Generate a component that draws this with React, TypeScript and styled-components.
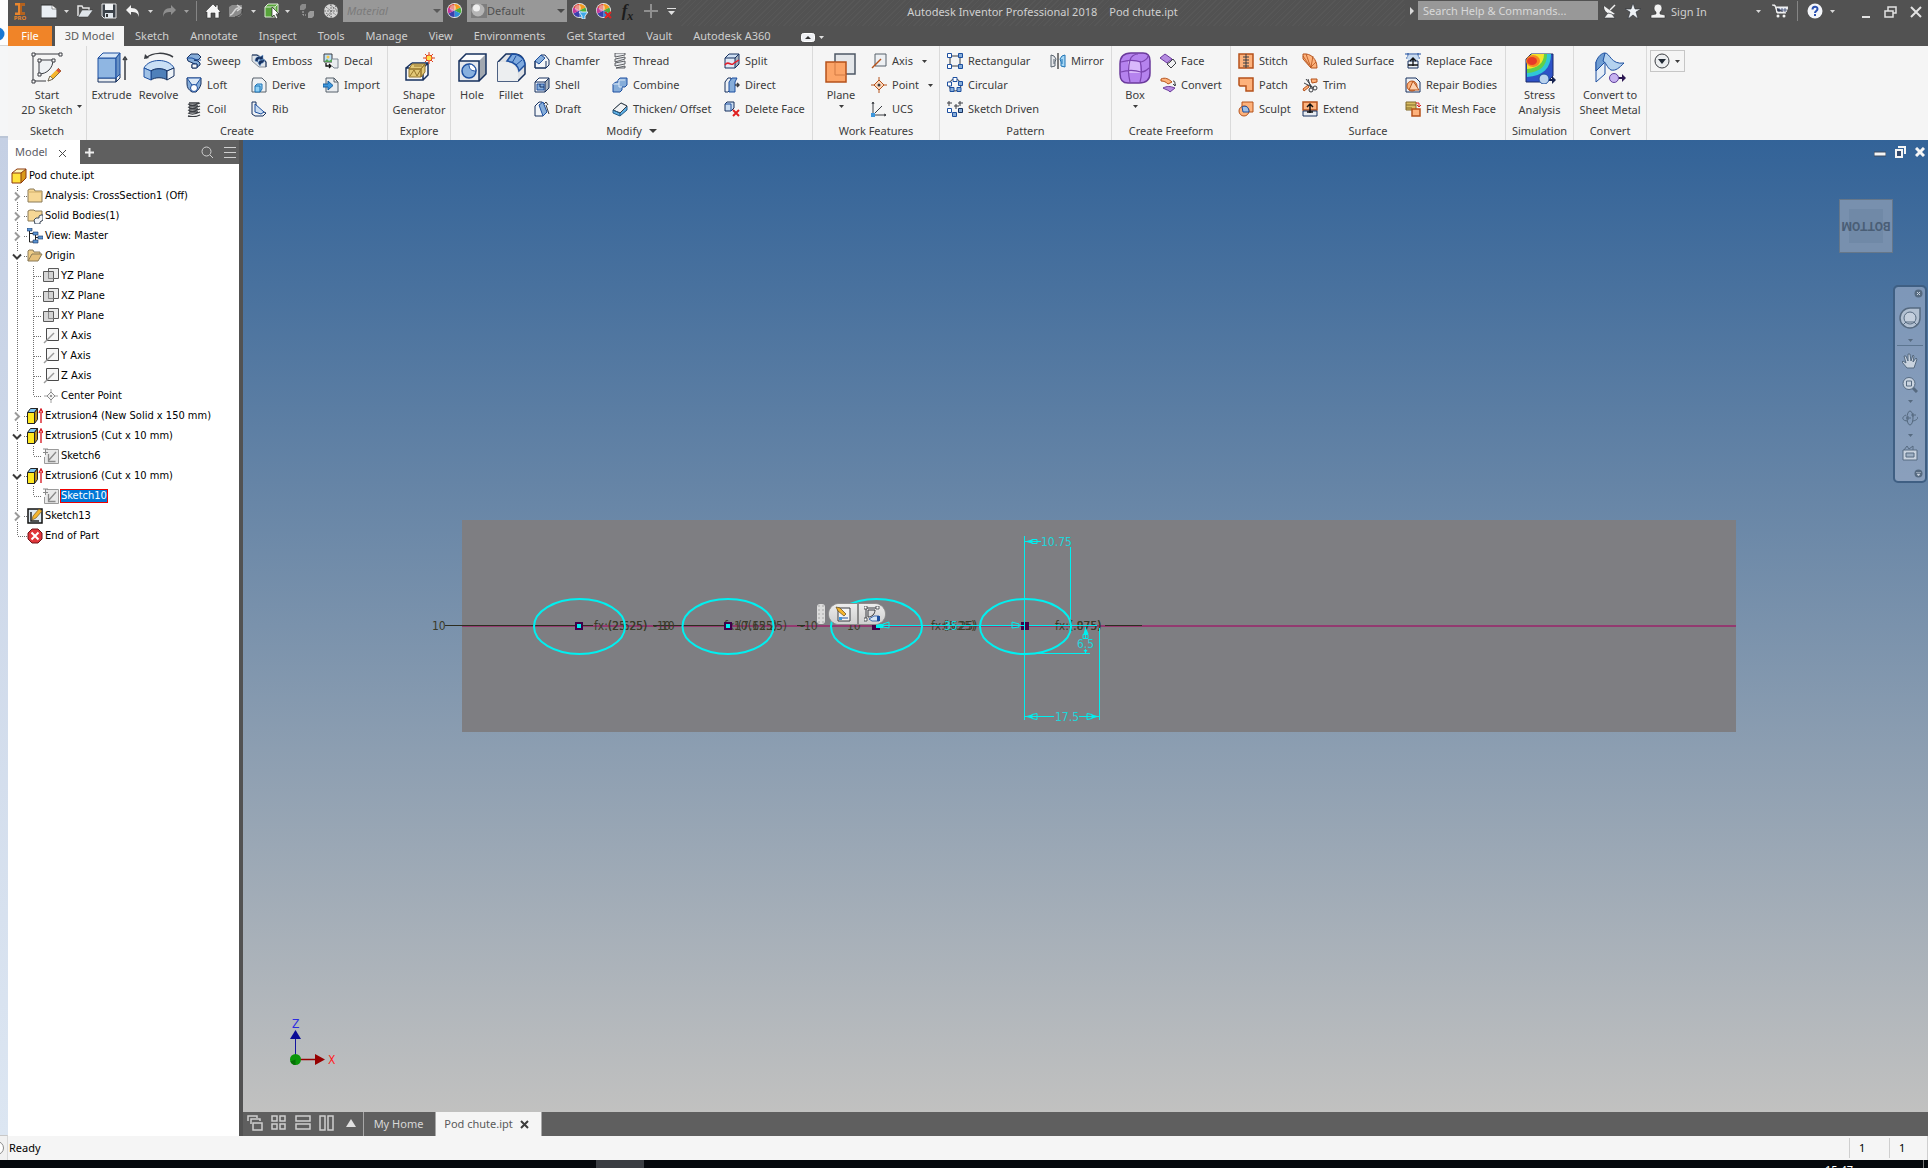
import React from "react";
import styled, { createGlobalStyle, css } from "styled-components";

const UI = `"Noto Sans", "Open Sans", sans-serif`;
const TREE = `"DejaVu Sans Condensed", "DejaVu Sans", sans-serif`;

const Global = createGlobalStyle`
  *, *::before, *::after { box-sizing: border-box; }
  html, body, #root { height: 100%; }
  body { margin: 0; overflow: hidden; font: 11px/16px ${UI}; color: #3c3c3c; background: #f5f5f5; }
  button, input, select { font: inherit; color: inherit; }
  svg { display: block; flex: none; }
`;

/* ---------- frame ---------- */
const Desktop = styled.div`display: flex; flex-direction: column; height: 100%;`;
const Screen = styled.div`display: flex; flex: 1; min-height: 0;`;
const BackWindow = styled.div`flex: none; width: 8px; display: flex; flex-direction: column; overflow: hidden; background: #fdfdfd;`;
const BackTop = styled.div`height: 46px; padding-top: 27px; border-bottom: 1px solid #d5d5d5;`;
const BackBand = styled.div`height: 92px; background: #f5f6f7; border-bottom: 2px solid #bac5d6;`;
const BackFill = styled.div`flex: 1; background: linear-gradient(#c5d0e4, #dce6f2);`;
const BackFoot = styled.div`height: 25px; padding-top: 4px; background: #f1f1f1; border-top: 1px solid #c8c8c8; border-right: 1px solid #d8d8d8;`;
const AppWindow = styled.div`flex: 1; min-width: 0; display: flex; flex-direction: column;`;
const Plain = css`border: 0; padding: 0; margin: 0; background: none;`;

/* ---------- title bar ---------- */
const TitleBar = styled.header`display: flex; height: 26px; background: #525252; color: #d6d6d6;`;
const Tool = styled.button<{ $w: number; $ml?: number }>`
  ${Plain} flex: none; width: ${p => p.$w}px; margin-left: ${p => p.$ml ?? 0}px; height: 22px;
  display: flex; align-items: center; justify-content: center;
`;
const Logo = styled.div`
  flex: none; width: 24px; margin-right: 6px; padding-top: 3px; display: flex; flex-direction: column; align-items: center;
  color: #e8862e; font: 700 6px/7px ${UI};
`;
const Rule = styled.span<{ $l: number; $r: number }>`flex: none; width: 1px; height: 20px; margin: 1px ${p => p.$r}px 0 ${p => p.$l}px; background: #858585;`;
const Combo = styled.label<{ $ml?: number }>`
  position: relative; flex: none; width: 100px; height: 22px; margin-left: ${p => p.$ml ?? 0}px; padding-left: 4px;
  display: flex; align-items: center; background: #989898; color: #555;
  & > svg:last-child { position: absolute; right: 2px; top: 9px; pointer-events: none; }
`;
const Picker = styled.select<{ $faint?: boolean }>`
  ${Plain} appearance: none; flex: 1; min-width: 0; outline: none; opacity: 1;
  font-style: ${p => (p.$faint ? "italic" : "normal")}; color: ${p => (p.$faint ? "#7b7b7b" : "#505050")};
`;
const Caption = styled.h1`
  flex: 1; margin: 0; font: 400 11px/24px ${UI}; display: flex; gap: 12px; justify-content: center; color: #d0d0d0;
  background: repeating-linear-gradient(135deg, #525252 0 3px, #575757 3px 4px);
`;
const Search = styled.input`
  ${Plain} flex: none; width: 180px; height: 19px; margin-top: 1px; padding: 0 5px; background: #989898; outline: none;
  &::placeholder { color: #d9d9d9; opacity: 1; }
`;
const SignIn = styled.button`${Plain} flex: none; width: 84px; height: 24px; padding-left: 1px; text-align: left; color: #d0d0d0;`;
const Fx = styled.span`
  font: italic 700 17px/18px "Liberation Serif", serif; color: #1c1c1c;
  & sub { font-size: 12px; line-height: 8px; }
`;

/* ---------- ribbon tabs ---------- */
const TabRow = styled.nav`display: flex; height: 20px; background: #525252;`;
const FileTab = styled.button`${Plain} width: 44px; margin-right: 3px; background: #f08428; color: #fff;`;
const RibbonTab = styled.button<{ $on?: boolean }>`
  ${Plain} padding: 0 11px 0 10px; color: #cfcfcf; white-space: nowrap;
  ${p => p.$on && css`width: 69px; margin-right: 1px; padding: 0; background: #f5f5f5; color: #5a5a5a;`}
`;

/* ---------- ribbon ---------- */
const Ribbon = styled.section`display: flex; height: 94px; background: #f5f5f5;`;
const Panel = styled.section<{ $w: number }>`
  flex: none; width: ${p => p.$w}px; padding-top: 1px; display: flex; flex-direction: column; border-right: 1px solid #dadada;
`;
const PanelBody = styled.div`flex: 1; display: flex;`;
const PanelTitle = styled.h2`
  margin: 0; height: 18px; font: 400 11px/18px ${UI}; display: flex; gap: 7px; align-items: center; justify-content: center; white-space: nowrap;
`;
const Big = styled.button<{ $w?: number }>`
  ${Plain} flex: ${p => (p.$w ? "none" : "1")}; width: ${p => (p.$w ? p.$w + "px" : "auto")}; padding-top: 5px;
  display: flex; flex-direction: column; align-items: center; line-height: 15px; white-space: pre-line;
  & > span { margin-top: 3px; }
  & > svg + span + svg { margin-top: 3px; }
`;
const BigText = styled.span`position: relative;`;
const SideCaret = styled.i`position: absolute; right: -9px; bottom: 9px;`;
const Column = styled.div<{ $w?: number; $ml?: number }>`
  flex: none; width: ${p => (p.$w ? p.$w + "px" : "auto")}; margin-left: ${p => p.$ml ?? 0}px; padding-top: 2px;
  display: flex; flex-direction: column; align-items: flex-start;
`;
const Small = styled.button`${Plain} height: 24px; display: flex; align-items: center; gap: 5px; white-space: nowrap;`;
const SmallCaret = styled.i`display: flex; margin-left: 4px;`;
const PanelMenu = styled.button`
  ${Plain} width: 35px; height: 22px; margin: 4px 0 0 3px; padding: 0 4px 0 3px; display: flex; align-items: center; justify-content: space-between;
  border: 1px solid #c6c6c6;
`;

/* ---------- model browser ---------- */
const Workspace = styled.main`flex: 1; min-height: 0; display: flex;`;
const Browser = styled.aside`flex: none; width: 235px; display: flex; flex-direction: column; background: #fff; border-right: 4px solid #525252;`;
const BrowserHead = styled.div`height: 24px; display: flex; align-items: center; background: #5f5f5f; color: #e4e4e4;`;
const BrowserTab = styled.div`
  width: 72px; height: 24px; padding: 0 13px 0 7px; display: flex; align-items: center; justify-content: space-between; background: #fff; color: #5c5c66;
  & > svg { margin-top: 3px; }
`;
const HeadButton = styled.button<{ $w: number; $push?: boolean }>`
  ${Plain} width: ${p => p.$w}px; height: 24px; margin-left: ${p => (p.$push ? "auto" : "0")}; display: flex; align-items: center; justify-content: center;
`;
const Tree = styled.ul`margin: 0; padding: 2px 0 0 1px; list-style: none; font: 11px/20px ${TREE}; color: #000;`;
const TreeRow = styled.li`display: flex; align-items: center; height: 20px; white-space: nowrap;`;
const RootRow = styled(TreeRow)`padding-left: 2px;`;
const TreeText = styled.span<{ $sel?: boolean }>`
  padding: 0 1px; margin-left: 1px;
  ${p => p.$sel && css`height: 14px; line-height: 12px; padding: 0; background: #0078d7; color: #fff; border: 1px solid #f00000;`}
`;

/* ---------- viewport ---------- */
const Stage = styled.div`flex: 1; min-width: 0; display: flex; flex-direction: column;`;
const Viewport = styled.div`position: relative; flex: 1; overflow: hidden; background: linear-gradient(#336398, #c1c1c0);`;
const Canvas = styled.svg`position: absolute; inset: 0; width: 100%; height: 100%;`;
const WindowButtons = styled.div`position: absolute; right: 1px; top: 1px; display: flex;`;
const ViewCube = styled.button`
  ${Plain} position: absolute; right: 35px; top: 59px; width: 54px; height: 54px; padding: 9px 0; background: #7890ae; border: 1px solid #667789;
  display: flex; justify-content: center;
  color: #4a5e76; font: 700 12px/34px "Roboto", sans-serif; transform: rotate(180deg);
  & > span { width: 34px; height: 34px; display: flex; justify-content: center; background: #7089a7; }
`;
const NavBar = styled.div`
  position: absolute; right: 1px; top: 145px; width: 34px; height: 198px; display: flex; flex-direction: column; align-items: center;
  background: rgba(170, 182, 205, 0.55); border: 2px solid #3f5f83; border-radius: 5px; background-clip: padding-box;
`;
const NavButton = styled.button<{ $h: number; $end?: boolean }>`
  ${Plain} width: 30px; height: ${p => p.$h}px; display: flex; align-items: center; justify-content: ${p => (p.$end ? "flex-end" : "center")}; padding-right: ${p => (p.$end ? 2 : 0)}px;
`;
const NavRule = styled.hr`width: 26px; height: 1px; margin: 1px 0 2px; border: 0; background: #5c7590;`;
const MiniBar = styled.div`position: absolute; left: 574px; top: 463px; display: flex; align-items: center; gap: 3px;`;
const Grip = styled.span`width: 8px; height: 20px; border-radius: 3px; background: radial-gradient(#c2c2c2 0 1px, transparent 1px) 0 0 / 4px 4px, #dcdcdc;`;
const Pill = styled.div`display: flex; height: 22px; border-radius: 11px; overflow: hidden; border: 1px solid #8c8c8c; background: #ddd;`;
const PillButton = styled.button`
  ${Plain} width: 28px; display: flex; align-items: center; justify-content: center; background: linear-gradient(#ececec, #cfcfcf);
  & + & { border-left: 2px solid #8a8a8a; }
`;

/* ---------- document tabs, status, taskbar ---------- */
const DocBar = styled.nav`display: flex; height: 24px; background: #5f5f5f; color: #d8d8d8;`;
const DocTab = styled.button<{ $w: number; $on?: boolean }>`
  ${Plain} width: ${p => p.$w}px; padding: 0 2px 0 0; display: flex; align-items: center; justify-content: center; gap: 7px; border-left: 1px solid #a8a8a8;
  ${p => p.$on && css`padding: 0 4px 0 0; background: #f5f5f5; color: #5a5a5a; border-right: 1px solid #a8a8a8;`}
`;
const Status = styled.footer`height: 24px; display: flex; align-items: center; padding-left: 1px; background: #f5f5f5; color: #000; border-right: 1px solid #cfcfcf;`;
const StatusText = styled.span`flex: 1;`;
const Count = styled.span<{ $w: number }>`width: ${p => p.$w}px; height: 20px; padding-left: 9px; line-height: 20px; border-left: 1px solid #cfcfcf;`;
const Taskbar = styled.div`height: 8px; display: flex; overflow: hidden; background: #05080c; color: #fff;`;
const ActiveApp = styled.span`width: 48px; margin-left: 596px; background: #3a3d42;`;
const Clock = styled.time`margin: 3px 70px 0 auto; height: 14px; line-height: 14px;`;
const ShowDesktop = styled.span`width: 5px; border-left: 1px solid #777;`;

/* ---------- icons ---------- */
const N = "#16305e", B = "#1c4fa0", O = "#b5521b", K = "#3a3d42";
const F1 = "#c9dcf1", F2 = "#86add9", OF = "#fdb27c";

const Ic = ({ s = 16, w, h, children }: { s?: number; w?: number; h?: number; children: React.ReactNode }) => (
  <svg width={w ?? s} height={h ?? s} viewBox={`0 0 ${w ?? s} ${h ?? s}`} fill="none" aria-hidden="true">{children}</svg>
);
const Caret = ({ c = "#3c3c3c", w = 5 }: { c?: string; w?: number }) => (
  <Ic w={w} h={w > 5 ? 4 : 3}><path d={`M0 0h${w}L${w / 2} ${w > 5 ? 4 : 3}z`} fill={c} /></Ic>
);
const Wheel = ({ extra }: { extra?: React.ReactNode }) => (
  <Ic>
    <circle cx="7.500" cy="7.500" r="7.500" fill="#e8e8e8" />
    <path d="M7.500 7.500L1.500 4.500A6.500 6.500 0 0 1 7.500 1z" fill="#d83a2c" />
    <path d="M7.500 7.500V1a6.500 6.500 0 0 1 6 3.500z" fill="#f29a1f" />
    <path d="M7.500 7.500l6-3a6.500 6.500 0 0 1 0 6z" fill="#4ab03c" />
    <path d="M7.500 7.500l6 3a6.500 6.500 0 0 1-6 3.500z" fill="#2f8fd8" />
    <path d="M7.500 7.500V14a6.500 6.500 0 0 1-6-3.500z" fill="#3a3fae" />
    <path d="M7.500 7.500l-6 3a6.500 6.500 0 0 1 0-6z" fill="#c43a9a" />
    <circle cx="6" cy="5" r="3" fill="#fff" opacity=".45" />
    {extra}
  </Ic>
);
const RedX = <path d="M9 9l6 6m0-6l-6 6" stroke="#e02020" strokeWidth="2" />;

const qat = {
  logo: <Ic w={12} h={12}><path d="M1 0h10v2.500H8v7h3V12H1V9.500h3v-7H1z" fill="#e8862e" /><path d="M6 0h5v2.500H8v7h3V12H6z" fill="#b5611c" /></Ic>,
  create: <Ic><path d="M0 2h11l5 4v9H0z" fill="#e9eef3" stroke="#2f2f2f" /><path d="M11 2v4h5z" fill="#fff" stroke="#555" strokeWidth=".6" /></Ic>,
  open: <Ic><path d="M1 13V3h4l1 2h6v2" stroke="#e4e4e4" strokeWidth="1.500" /><path d="M1 14l4-7h11l-5 7z" fill="#dfe5ea" stroke="#333" strokeWidth=".5" /></Ic>,
  save: <Ic><path d="M1 1h14v14H3l-2-2z" fill="#3b4148" stroke="#e6e6e6" /><path d="M4 1h8v6H4z" fill="#f2f4f6" /><path d="M4 10h8v5H4z" fill="#dfe5ea" /><path d="M5 11h2v3H5z" fill="#333" /></Ic>,
  undo: <Ic><path d="M6 2v3c6 0 8 3 8 9-1-4-3-5-8-5v3L1 7z" fill="#f2f2f2" /></Ic>,
  redo: <Ic><path d="M10 2v3c-6 0-8 3-8 9 1-4 3-5 8-5v3l5-5z" fill="#8e8e8e" /></Ic>,
  home: <Ic><path d="M8 1L0 9h2v6h4v-5h4v5h4V9h2l-3-3V2h-2v2z" fill="#f6f6f6" stroke="#333" strokeWidth=".6" /></Ic>,
  update: <Ic><path d="M1 4l3-2h10v9l-3 3H1z" fill="#8b8b8b" /><path d="M2 12C6 12 6 4 11 5m-2-3l4 3-4 3" stroke="#d5d5d5" strokeWidth="1.500" /><path d="M14 6c1 5-3 7-7 8" stroke="#3d3d3d" /></Ic>,
  select: <Ic><path d="M1 4l3-3h10v9l-3 4H1z" fill="#57a33a" stroke="#dcebd4" /><path d="M1 4h10v10M11 4l3-3" stroke="#dcebd4" /><path d="M8 4v10l2-2 2 4 2-1-2-4h3z" fill="#fff" stroke="#222" strokeWidth=".7" /></Ic>,
  parts: <Ic><path d="M1 3l2-2h4v4L5 7H1z" fill="#8a8a8a" /><path d="M9 10l2-2h4v5l-2 2H9z" fill="#9a9a9a" /><path d="M4 8v4h3" stroke="#b5b5b5" strokeDasharray="2 1" /></Ic>,
  ball: <Ic><circle cx="8" cy="8" r="7" fill="#d6d6d6" /><path d="M3 4l10 8M8 1v14M1 8h14M4 13L13 3M3 10l6 4M7 2l7 5" stroke="#777" strokeDasharray="2 1" /></Ic>,
  sphere: <Ic><path d="M0 1h16v14H0z" fill="#7d7d7d" /><circle cx="7" cy="7" r="6.500" fill="#b5b5b5" /><circle cx="5.500" cy="5" r="3.500" fill="#eee" /></Ic>,
  plus: <Ic><path d="M8 1v14M1 8h14" stroke="#8f8f8f" strokeWidth="2" /></Ic>,
  more: <Ic w={9} h={7}><path d="M0 0h9v1H0zM1 3h7L4.500 7z" fill="#e0e0e0" /></Ic>,
  dish: <Ic><path d="M2 3c0 6 5 9 11 8L9 10l-2-2z" fill="#f2f2f2" stroke="#2b3038" strokeWidth=".6" /><path d="M2 3c0 6 5 9 11 8z" fill="#f2f2f2" /><path d="M6 10l-4 5h11l-3-4z" fill="#f2f2f2" stroke="#2b3038" strokeWidth=".6" /><path d="M8 7l5-5" stroke="#f2f2f2" strokeWidth="1.500" /></Ic>,
  star: <Ic><path d="M8 0l2 6h6l-5 3 2 7-5-4-5 4 2-7-5-3h6z" fill="#eef2f6" stroke="#2b3038" strokeWidth=".6" /></Ic>,
  user: <Ic><path d="M4 5a4 4 0 0 1 8 0c0 2-1 3-2 4v2l5 1v3H1v-3l5-1V9C5 8 4 7 4 5z" fill="#f2f2f2" stroke="#333" strokeWidth=".6" /></Ic>,
  cart: <Ic><path d="M0 2h3l2 8h9M4 4h12l-2 5H5z" fill="#e9edf5" stroke="#f2f2f2" /><path d="M7 5v4M10 5v4M13 5v4M5 7h10" stroke="#23305c" strokeWidth=".7" /><circle cx="6" cy="13" r="1.500" fill="#f2f2f2" /><circle cx="12" cy="13" r="1.500" fill="#f2f2f2" /></Ic>,
  help: <Ic><circle cx="8" cy="8" r="7.500" fill="#f4f6fa" /><path d="M5.500 6.500C5.500 3 10.500 3 10.500 6c0 2-2.500 2-2.500 4M8 11v2" stroke="#2a50b0" strokeWidth="2" /></Ic>,
  min: <Ic w={10} h={16}><path d="M1 13h8v2H1z" fill="#e2e2e2" /></Ic>,
  restore: <Ic w={13} h={16}><path d="M1 8h8v6H1zM4 8V4h8v6H9" stroke="#e2e2e2" strokeWidth="1.500" /></Ic>,
  close: <Ic w={12} h={16}><path d="M1 4l10 10M11 4L1 14" stroke="#e2e2e2" strokeWidth="2" /></Ic>,
};

const cube = (fill: string, top: string) => (
  <><path d="M1 5h10v10H1z" fill={fill} /><path d="M1 5l4-4h10l-4 4z" fill={top} /><path d="M11 5l4-4v10l-4 4z" fill="#a9b3bf" /><path d="M1 5h10v10H1zM1 5l4-4h10v10l-4 4M11 5l4-4" stroke={N} /></>
);
const pencil = (x: number, y: number) => (
  <g transform={`translate(${x} ${y})`}><path d="M0 14l2-5 8-8 3 3-8 8z" fill="#f5b52e" stroke="#6a5426" strokeWidth=".8" /><path d="M0 14l2-5 3 3z" fill="#fff6df" stroke="#444" strokeWidth=".6" /><path d="M8 3l2-2 3 3-2 2z" fill="#d4503c" /><path d="M2 9l8-8" stroke="#fff" strokeWidth=".8" /></g>
);

const big = {
  sketch: <Ic s={32}><path d="M3 2h26M2 3v26M3 29h12" stroke={K} /><path d="M8 8h14c0 8-6 14-14 14z" stroke={K} fill="#eef1f4" /><path d="M1 1h3v3H1zM28 1h3v3h-3zM1 28h3v3H1zM7 7h3v3H7zM21 7h3v3h-3zM7 21h3v3H7z" fill="#fff" stroke={K} />{pencil(17, 15)}</Ic>,
  extrude: <Ic s={32}><path d="M2 26h18v4H2zM20 26l4-4v4l-4 4z" fill="#e8ecf0" stroke={N} /><path d="M2 6h18v20H2z" fill="#8fb6e2" stroke={B} /><path d="M2 6l5-5h17l-4 5z" fill="#d6e6f7" stroke={B} /><path d="M20 6l4-5v21l-4 4z" fill="#6791c6" stroke={B} /><path d="M29 28V7m-2 1l2-3 2 3" stroke={K} strokeWidth="1.500" /></Ic>,
  revolve: <Ic s={32}><path d="M3 6C10 0 22 0 30 5" stroke={K} strokeWidth="1.500" /><path d="M1 7l1-5 4 4z" fill={K} /><path d="M1 16C6 6 26 6 31 16l-7 3C20 16 12 16 8 19z" fill="#c9dff5" stroke={B} /><path d="M8 19c4-3 12-3 16 0v9c-4-3-12-3-16 0z" fill="#4f80ba" stroke={N} /><path d="M1 16l7 3v9l-7-3z" fill="#9fc1e6" stroke={B} /><path d="M31 16l-7 3v9l7-4z" fill="#eef3f8" stroke={N} /></Ic>,
  shape: <Ic s={32}><path d="M3 16h17v12H3zM9 11h16v12l-5 5M20 16l5-5M3 16l6-5" fill="none" stroke={N} strokeWidth="1.500" /><path d="M6 17h12v8H6zM9 12h13l-4 5H6zM18 17l4-5v8l-4 5z" fill="#e2c877" stroke="#94742a" /><path d="M7 24l4-6 3 6 4-7M11 14h8" stroke="#94742a" /><path d="M26 0v12M20 6h12M22 2l8 8M30 2l-8 8" stroke="#e2411e" /><circle cx="26" cy="6" r="3" fill="#ffdf4a" stroke="#e2411e" /></Ic>,
  hole: <Ic s={32}><path d="M3 9h20v20H3z" fill="#e6e9ed" /><path d="M3 9l7-7h20l-7 7z" fill="#fbfcfd" /><path d="M23 9l7-7v20l-7 7z" fill="#a2a8b0" /><path d="M3 9h20v20H3zM3 9l7-7h20v20l-7 7" stroke={N} strokeWidth="1.500" /><circle cx="13" cy="19" r="7" fill="#87b0df" stroke={B} strokeWidth="1.500" /><path d="M13 12a7 7 0 0 1 7 7c-5 0-7-2-7-7z" fill="#fff" stroke={B} /></Ic>,
  fillet: <Ic s={32}><path d="M3 10l8-8h8c8 0 11 6 11 12v8l-7 7H3z" fill="#dfe2e6" stroke={N} strokeWidth="1.500" /><path d="M3 10h6c9 0 13 5 14 12v7H3z" fill="#eceef0" /><path d="M12 9l5-7c8 0 13 5 13 11l-6 6C23 13 19 10 12 9z" fill="#7faade" stroke={B} strokeWidth="1.500" /><path d="M21 4l-4 7M27 8l-6 5" stroke={B} /></Ic>,
  plane: <Ic s={32}><path d="M10 2h20v20H10z" fill="#e4e7ea" stroke="#4d5865" strokeWidth="1.500" /><path d="M1 10h20v20H1z" fill="#fca467" stroke={O} strokeWidth="1.500" /><path d="M10 10v13h11" stroke="#d27a44" /></Ic>,
  box: <Ic s={32}><path d="M1 12C1 4 5 1 12 1h12c5 0 7 3 7 8v12c0 7-4 10-11 10H9c-6 0-8-3-8-9z" fill="#b583ee" stroke="#6b3a9c" strokeWidth="1.500" /><path d="M9 9h12v12H9z" fill="#d9b8fb" /><path d="M2 20c6-2 14-2 20 0 3 0 6-2 8-4M2 10c7-2 14-2 20 0 4-1 7-4 7-6M11 30c-2-8-2-15 0-22 1-4 5-6 8-6M21 30c2-7 2-14 0-21" stroke="#7c46b0" strokeWidth="1.200" /></Ic>,
  stress: <Ic s={32}><path d="M2 7l5-5h22v22l-6 6H2z" fill="#2e52c8" stroke="#1b2a6a" /><path d="M3 7l5-5h19c0 14-8 22-24 23z" fill="#2fc6d8" /><path d="M3 7l5-5h15c0 12-7 18-20 19z" fill="#5fd04a" /><path d="M3 7l5-5h12c0 9-6 14-17 15z" fill="#f3e52c" /><ellipse cx="9" cy="9" rx="7" ry="6" fill="#f58a22" /><ellipse cx="8" cy="9" rx="5" ry="4" fill="#e63a28" /><path d="M25 27h3v-3l4 4-4 4v-3h-3z" fill="#16224f" /><circle cx="20" cy="27" r="5" fill="#b9d2ee" stroke={B} /></Ic>,
  sheet: <Ic s={32}><path d="M2 10v20l9-8V8z" fill="#e6eef7" stroke={B} /><path d="M2 10C4 4 8 1 11 1c2 3 1 6 0 9l-9 9z" fill="#6f9dd2" stroke={B} /><path d="M11 1c5 0 6 12 19 10-5 5-8 8-13 7-4-2-5-8-8-9z" fill="#b4d2ef" stroke={B} /><path d="M25 25h3v-3l4 4-4 4v-3h-3z" fill="#2c1752" /><circle cx="20" cy="26" r="4.500" fill="#c7b2f0" stroke="#5f3f9c" /></Ic>,
};

const nodes = (pts: number[][]) => pts.map(([x, y], i) => <path key={i} d={`M${x} ${y}h4v4h-4z`} fill={i % 2 ? F2 : "#fff"} stroke={B} />);
const sm: Record<string, React.ReactNode> = {
  Sweep: <Ic><path d="M1 5l4-4h7l3 3-3 3H8l4 1 2 2v2l-4 3H6v-3l3-1-7-3z" fill={F2} stroke={N} /><path d="M1 5h5l5 2h4M6 11h5v4" stroke={B} /><path d="M6 11h5v4H6z" fill="#f5f7fa" stroke={N} /></Ic>,
  Loft: <Ic><path d="M1 1h14v6c-1 4-3 6-5 8H6C3 13 1 11 1 7z" fill={F2} stroke={N} /><path d="M1 1h14l-5 7H6z" fill="#dce9f6" stroke={B} /><circle cx="8" cy="11" r="3.500" fill="#fff" stroke={B} /></Ic>,
  Coil: <Ic><path d="M2 3c4 2 8 1 12-1M2 6c4 2 8 1 12-1M2 9c4 2 8 1 12-1M2 12c4 2 8 1 12-1M2 15c4 1 8 1 12-1M3 2h10M3 5l9 0M3 8h9M3 11h9" stroke={K} strokeWidth="1.300" /></Ic>,
  Emboss: <Ic><path d="M1 2h6l8 6v6H8L1 8z" fill="#dfe4e9" stroke="#87909b" /><path d="M1 2h5l9 7v5" stroke={N} /><path d="M4 8c0-4 3-5 5-4l3-2v5H8l1-1c-2 0-2 1-2 3zM7 10c1-3 3-4 7-3l-2 3c-2 0-2 1-3 3z" fill={N} stroke="#6fa3dc" strokeWidth=".5" /></Ic>,
  Derive: <Ic><path d="M2 1h9l4 4v10H1V5z" fill="#eef1f4" stroke="#56606b" /><path d="M4 9l2-2h5v5l-2 3H4z" fill="#8fd0f5" stroke="#1d73b5" /><path d="M4 9h5v6" stroke="#1d73b5" /></Ic>,
  Rib: <Ic><path d="M1 1h4v9l8 1 2 1-3 3H4l-3-2z" fill="#eef1f4" stroke={N} /><path d="M4 3l9 8-3 2-6-2z" fill={F1} stroke={B} /></Ic>,
  Decal: <Ic><path d="M1 1h8v8H1z" fill="#bfe0f7" stroke={K} /><circle cx="5" cy="4" r="1.500" fill="#f7c948" /><path d="M1 9l3-3 2 2 3-2v3z" fill="#58a558" /><path d="M9 6h6v9l-4 0-2-2" fill="#e9ecef" stroke="#7d8792" /><path d="M3 10v3h5M6 11l2 2-2 2" stroke="#111" strokeWidth="1.300" /></Ic>,
  Import: <Ic><path d="M3 1h8l4 4v10H3z" fill="#e9ecef" stroke="#56606b" /><path d="M11 1v4h4" stroke="#56606b" /><path d="M0 7h5V4l5 4.500L5 13v-3H0z" fill="#3d97dd" stroke="#175f9f" /></Ic>,
  Chamfer: <Ic><path d="M1 8l6-6h4l4 5v5l-3 3H1z" fill="#f4f6f8" stroke={N} /><path d="M1 8l6-6 4 3-6 6z" fill={F2} stroke={B} /><path d="M1 8v7h11V8" stroke={N} fill="none" /></Ic>,
  Shell: <Ic>{cube("#eef1f5", "#fff")}<path d="M3 7h7v6H3z" fill={F2} stroke={B} /><path d="M6 7v3h4" stroke={N} /></Ic>,
  Draft: <Ic><path d="M1 5l4-4h3l4 10-3 4H1z" fill="#f1f4f7" stroke={N} /><path d="M5 4l4-3 4 10-4 4z" fill={F2} stroke={B} /><path d="M12 4l3 9M10 3l2-2 2 3" stroke={K} /></Ic>,
  Thread: <Ic><path d="M3 0h10v2L3 4zM3 6l10-2v2L3 9zM3 10l10-2v3L3 13zM4 15l9-2v2z" fill="#e5e7ea" stroke={K} strokeWidth=".8" /></Ic>,
  Combine: <Ic><path d="M1 7l3-2h2V3l2-2h7v7l-2 2h-3v3l-2 2H1z" fill={F2} stroke={B} /><path d="M1 7h6V3h6M7 7v3h3" stroke="#dbe8f6" /></Ic>,
  "Thicken/ Offset": <Ic><path d="M1 9l8-7 6 3v4l-7 6-7-3z" fill="#5fb0e6" stroke="#245b85" /><path d="M1 9l8-7 6 3-7 7z" fill="#f0f2f4" stroke={K} /><path d="M1 9l7 3v3" stroke="#245b85" /></Ic>,
  Split: <Ic>{cube("#dfe9f5", "#cfe0f4")}<path d="M1 12c3-5 6 1 8-1s3-2 6-4" stroke="#e21f2c" strokeWidth="1.500" /></Ic>,
  Direct: <Ic><path d="M1 5l3-4h3v11l-3 3H1z" fill="#eef1f5" stroke={N} /><path d="M5 5l3-4h5l-2 4v10H5z" fill={F2} stroke={B} /><path d="M11 8h4m-2-2l2 2-2 2" stroke={K} strokeWidth="1.500" /></Ic>,
  "Delete Face": <Ic><path d="M1 3l2-2h7v6l-3 3H1z" fill={F1} stroke={N} /><path d="M1 3h6v7" stroke={B} />{RedX}</Ic>,
  Axis: <Ic><path d="M4 1h11v12H4z" fill="#edf0f3" stroke="#56606b" /><path d="M1 15l9-9" stroke={O} strokeWidth="1.500" /></Ic>,
  Point: <Ic><path d="M8 0v16M0 8h16" stroke={O} /><path d="M8 3l5 5-5 5-5-5z" fill="#fdd7bb" stroke={O} /><circle cx="8" cy="8" r="1.500" fill={K} /></Ic>,
  UCS: <Ic><path d="M2 14V1M2 14h13M3 13l8-8M1 3l1-2 1 2M13 13l2 1-2 1" stroke={K} /><path d="M0 12h4v4H0z" fill="#3d97dd" /></Ic>,
  Rectangular: <Ic><path d="M3 3h10v10H3z" stroke={K} />{nodes([[0.5, 0.5], [11.5, 0.5]])}{nodes([[0.5, 11.5], [11.5, 11.5]])}</Ic>,
  Circular: <Ic><circle cx="8" cy="8" r="6" stroke={K} />{nodes([[6, 0.5], [11.5, 4.5]])}{nodes([[0.5, 5], [10, 10.5]])}<path d="M3 10.500h4v4H3z" fill={F2} stroke={B} /></Ic>,
  "Sketch Driven": <Ic><path d="M2 0v5M0 2h5M9 3v5M7 5h5M13 0v5M11 2h5" stroke={K} />{nodes([[0.5, 7.5], [5.5, 11.5]])}<path d="M11.500 7.500h4v4h-4z" fill={F2} stroke={N} /></Ic>,
  Mirror: <Ic><path d="M8 0v16" stroke="#000" /><path d="M1 2l3 1 2 3-1 3v4l-4 1zM4 6v5" fill="#e6e8eb" stroke="#596470" /><path d="M15 2l-3 1-2 3 1 3v4l4 1zM12 6v5" fill="#a8d8f5" stroke="#1d73b5" /></Ic>,
  Face: <Ic><path d="M5 1l7 5-5 4-7-5z" fill="#b48be0" stroke="#6b3a9c" /><path d="M10 9l3-3 3 4-5 5-4-4z" fill="#f1f1f3" stroke={K} /></Ic>,
  Convert: <Ic><path d="M1 2c4-2 8 0 11 3L8 7C6 5 4 4 1 4z" fill={OF} stroke={O} /><path d="M3 11c4-2 7-2 12 0l-5 4c-1-2-4-2-7-4z" fill="#b48be0" stroke="#6b3a9c" /><path d="M13 4c2 0 2 1 2 4m-2-1l2 2 1-2" stroke={K} /></Ic>,
  Stitch: <Ic><path d="M1 1h14v14H1z" fill={OF} stroke={O} strokeWidth="1.500" /><path d="M8 1v14M5 4h6M5 7h6M5 10h6M5 13h6" stroke={K} /></Ic>,
  Patch: <Ic><path d="M1 1h14v13H8V9H2L1 8z" fill={OF} stroke={O} strokeWidth="1.500" /></Ic>,
  Sculpt: <Ic><path d="M4 1h11v10H4z" fill={OF} stroke={O} /><circle cx="6" cy="10" r="5" fill={OF} stroke={O} /><path d="M4 6c4-2 7 0 7 5H5z" fill="#9fc1e8" stroke={B} /></Ic>,
  "Ruled Surface": <Ic><path d="M1 1c8-1 14 5 14 14h-6L1 6z" fill={OF} stroke={O} /><path d="M9 15L4 1M9 14l5-5M9 14l2-11M7 12L1 3" stroke={O} strokeWidth=".8" /></Ic>,
  Trim: <Ic><path d="M9 2h6v3l-5 1zM1 12l5-4 1 2-5 4z" fill={OF} stroke={O} /><path d="M2 6l10 5M6 2l3 9M4 2l6 8" stroke={K} /><circle cx="9" cy="13" r="2" stroke={K} /><circle cx="13" cy="11" r="2" stroke={K} /></Ic>,
  Extend: <Ic><path d="M1 1h14v8H1z" fill={OF} stroke={O} strokeWidth="1.500" /><path d="M1 10h14v5H1z" fill="#e8ecf1" stroke={N} /><path d="M8 12V4M5 6l3-3 3 3M5 11h6" stroke="#111" strokeWidth="1.500" /></Ic>,
  "Replace Face": <Ic><path d="M0 1h16M3 0v5h-2M13 0v5h2" stroke={B} /><path d="M2 5l2-3h8l2 3-2 3H4z" fill={F1} /><path d="M3 8h10v7H3z" fill="#eef1f5" stroke={N} /><path d="M8 13V5M5 8l3-3 3 3M3 12h10" stroke="#111" strokeWidth="1.300" /></Ic>,
  "Repair Bodies": <Ic><path d="M1 1h10l4 4v10H1z" fill="#eef1f5" stroke={N} /><circle cx="7" cy="9" r="5" fill={OF} stroke={O} /><path d="M8 4l6 9H4z" fill="#fcd0ae" stroke={O} /></Ic>,
  "Fit Mesh Face": <Ic><path d="M1 1h10v8H1z" fill="#d8bd62" stroke="#80692a" /><path d="M1 4h10M1 7h6" stroke="#80692a" /><path d="M7 8h8v7H7z" fill={OF} stroke={O} strokeWidth="1.500" /><path d="M11 2h3v4m-2-2l2 2 2-2" stroke="#e02020" /></Ic>,
};

const tr: Record<string, React.ReactNode> = {
  part: <Ic><path d="M1 5h9v10H1z" fill="#ffe23c" /><path d="M1 5l5-4h9l-5 4z" fill="#fff6b8" /><path d="M10 5l5-4v9l-5 5z" fill="#d99a1a" /><path d="M1 5h9v10H1zM1 5l5-4h9v9l-5 5M10 5l5-4" stroke="#8c3a10" /></Ic>,
  folder: <Ic><path d="M1 14V2l2-1h4l1 2h7v11z" fill="#f6d795" stroke="#8a7a58" /><path d="M1 4h14" stroke="#cfae6b" /></Ic>,
  bodies: <Ic><path d="M1 13V3l2-1h4l1 1h7v10z" fill="#f6d795" stroke="#8a7a58" /><path d="M7 12l2-2h3V8l2-1h2v5l-3 2v2H8z" fill="#f3f5f8" stroke="#3c4a5c" /></Ic>,
  view: <Ic><path d="M2.500 2v12h4M3 5.500h3M8.500 6v8M9 9.500h3" stroke="#222" /><path d="M0 0h5v3H0zM6 4h5v3H6zM11 8h5v3h-5zM6 12h5v3H6z" fill="#5b94d2" stroke={N} strokeWidth=".6" /></Ic>,
  open: <Ic><path d="M1 13V3l1-1h4l1 2h6v3" fill="#f0cd86" stroke="#8a7a58" /><path d="M1 13l4-7h10l-4 7z" fill="#e6c07a" stroke="#8a7a58" /></Ic>,
  plane: <Ic><path d="M5.500.5h10v10h-10z" fill="#ececec" stroke="#5a5a5a" /><path d="M.5 3.500h10v10H.5z" fill="#c9c9c9" fillOpacity=".75" stroke="#5a5a5a" /><path d="M5.500 4v6.500h5" stroke="#8a8a8a" /></Ic>,
  axis: <Ic><path d="M3.500.5h12v12h-12z" fill="#f6f6f6" stroke="#4a4a4a" /><path d="M1 15L11 5" stroke="#9a9a9a" strokeWidth="1.500" /></Ic>,
  point: <Ic><path d="M8 1v14M1 8h14" stroke="#a0a0a0" /><path d="M8 4l4 4-4 4-4-4z" fill="#f2f2f2" stroke="#8c8c8c" /><circle cx="8" cy="8" r="1" fill="#777" /></Ic>,
  extrusion: <Ic><path d="M.5 4.500h7v11h-7z" fill="#ffe81f" stroke="#222" /><path d="M.5 4.500l3-4h7l-3 4z" fill="#7fc3f0" stroke="#222" /><path d="M7.500 4.500l3-4v11l-3 4z" fill="#b88a14" stroke="#222" /><path d="M14 15V4m-2 1l2-4 2 4" stroke="#d6121c" strokeWidth="1.300" /></Ic>,
  sketchUsed: <Ic><path d="M3.500 1.500h12v14h-14V9" stroke="#9a9a9a" fill="#e9e9e9" /><path d="M6 12l7-8M5.500 6v7.500h7" stroke="#8a8a8a" strokeWidth="1.300" /><path d="M0 1h5M2.500 1v6M0 4.500h5" stroke="#8a8a8a" /></Ic>,
  sketch: <Ic><path d="M1 1h14v14H1z" fill="#dfe8ef" stroke="#111" strokeWidth="1.500" /><path d="M4 4v9h8" stroke="#222" strokeWidth="1.500" /><path d="M5 12l1-4 6-7 3 2-6 7z" fill="#f5b52e" stroke="#7a5c1e" strokeWidth=".7" /></Ic>,
  end: <Ic><path d="M5 1h6l4 4v6l-4 4H5l-4-4V5z" fill="#e0353a" stroke="#6e1418" /><path d="M4.500 4.500l7 7m0-7l-7 7" stroke="#fff" strokeWidth="2" /></Ic>,
};

/* ---------- ribbon pieces ---------- */
const S = ({ n, caret }: { n: string; caret?: boolean }) => (
  <Small>{sm[n]}<span>{n}</span>{caret && <SmallCaret><Caret /></SmallCaret>}</Small>
);
const P = ({ w, title, menu, children }: { w: number; title: string; menu?: boolean; children: React.ReactNode }) => (
  <Panel $w={w}><PanelBody>{children}</PanelBody><PanelTitle>{title}{menu && <Caret w={8} />}</PanelTitle></Panel>
);
const C = ({ w, ml, items }: { w?: number; ml?: number; items: string[] }) => (
  <Column $w={w} $ml={ml}>{items.map(n => <S key={n} n={n} caret={n === "Axis" || n === "Point"} />)}</Column>
);

/* ---------- tree ---------- */
type Node = { t: string; i: string; l: number; c?: "open" | "shut"; last?: boolean; sel?: boolean };
const rows: Node[] = [
  { t: "Analysis: CrossSection1 (Off)", i: "folder", l: 1, c: "shut" },
  { t: "Solid Bodies(1)", i: "bodies", l: 1, c: "shut" },
  { t: "View: Master", i: "view", l: 1, c: "shut" },
  { t: "Origin", i: "open", l: 1, c: "open" },
  { t: "YZ Plane", i: "plane", l: 2 }, { t: "XZ Plane", i: "plane", l: 2 }, { t: "XY Plane", i: "plane", l: 2 },
  { t: "X Axis", i: "axis", l: 2 }, { t: "Y Axis", i: "axis", l: 2 }, { t: "Z Axis", i: "axis", l: 2 },
  { t: "Center Point", i: "point", l: 2, last: true },
  { t: "Extrusion4 (New Solid x 150 mm)", i: "extrusion", l: 1, c: "shut" },
  { t: "Extrusion5 (Cut x 10 mm)", i: "extrusion", l: 1, c: "open" },
  { t: "Sketch6", i: "sketchUsed", l: 2, last: true },
  { t: "Extrusion6 (Cut x 10 mm)", i: "extrusion", l: 1, c: "open" },
  { t: "Sketch10", i: "sketchUsed", l: 2, last: true, sel: true },
  { t: "Sketch13", i: "sketch", l: 1, c: "shut" },
  { t: "End of Part", i: "end", l: 1, last: true },
];
const Guide = ({ n }: { n: Node }) => {
  const w = n.l === 1 ? 18 : 34;
  const dots = { stroke: "#6f6f6f", strokeDasharray: "1 1" };
  return (
    <Ic w={w} h={20}>
      <path d={`M8.500 0V${n.l === 1 && n.last ? 10 : 20}`} {...dots} />
      {n.l === 1 && <path d={`M${n.c ? 15 : 9} 10.500H18`} {...dots} />}
      {n.l === 2 && <path d={`M24.500 0V${n.last ? 10 : 20}M25 10.500h8`} {...dots} />}
      {n.c && <path d="M3 5h11v11H3z" fill="#fff" />}
      {n.c === "shut" && <path d="M6 6.500l4 4-4 4" stroke="#9a9a9a" strokeWidth="2" />}
      {n.c === "open" && <path d="M4 8.500l4 4 4-4" stroke="#3a3a3a" strokeWidth="2" />}
    </Ic>
  );
};

/* ---------- sketch drawing ---------- */
const CY = "#00f0f0";
const Drawing = () => (
  <Canvas aria-label="Sketch geometry">
    <g transform="translate(-243 -140)" fontFamily={TREE} fontSize="12">
      <path d="M462 520h1274v212H462z" fill="#7e7e82" />
      <path d="M462 626h1274" stroke="#933a70" strokeWidth="2" />
      <path d="M445 625.500h148M653 625.500h71M797 625.500h8M1105 625.500h37" stroke="#2d2d20" />
      <g fill="#3a3a28">
        <text x="432" y="630">10</text>
        <text x="594" y="630">fx:(25.25)</text><text x="608" y="630">(2.625)</text>
        <text x="653" y="630">-10</text><text x="661" y="630">10</text>
        <text x="724" y="630">fx:(7.625)</text><text x="734" y="630">10(15.25)</text>
        <text x="800" y="630">-10</text><text x="847" y="630">10</text>
        <text x="931" y="630">fx:(5.25)</text><text x="943" y="630">(.625)</text>
        <text x="1055" y="630">fx:(.875)</text><text x="1069" y="630">(.075)</text>
      </g>
      <g fill="#40004a">
        <path d="M575 622h8v8h-8zM724 622h8v8h-8zM872 622h8v8h-8zM1021 622h8v8h-8z" />
      </g>
      <path d="M577 624h4v4h-4zM726 624h4v4h-4z" fill={CY} />
      <g fill="none" stroke={CY} strokeWidth="2">
        {[579.5, 728, 876.5, 1025.5].map(x => <ellipse key={x} cx={x} cy="626.5" rx="45.5" ry="27.5" />)}
      </g>
      <g fill="none" stroke={CY}>
        <path d="M1024.500 536v184M1070.500 547v72M1099.500 628v92M1035 653.500h55" />
        <path d="M1025 541.500h16M1025 716.500h29M1079 716.500h20M876 625.500h149M1029 625.500h68" />
        <path d="M1032 539.500h5v4h-5zM1032 714.500l5-1v6l-5-1zM1092 714.500l-5-1v6l5-1zM883 624l6-2v6l-6-1zM1019 624l-7-2v6l7-1z" />
        <path d="M1085.500 627v12M1083 634.500h5v4h-5zM1085.500 649v5" />
      </g>
      <path d="M1025 541.500l7-2v4zM1025 716.500l7-2v4zM1099 716.500l-7-2v4zM876 624h7v4h-7zM1085.500 627l3 7h-5zM1085.500 653l2-3h-4z" fill={CY} />
      <g fill="#1ed6da">
        <text x="1041" y="546">10.75</text><text x="1055" y="721">17.5</text><text x="1077" y="648">6.5</text><text x="944" y="630">35</text>
      </g>
      <path d="M295.500 1059V1038" stroke="#1414a0" /><path d="M290 1039h11l-5.500-9z" fill="#0a0a96" />
      <path d="M300 1059.500h16" stroke="#960000" strokeWidth="1.500" /><path d="M315 1054v11l10-5.500z" fill="#960000" />
      <circle cx="295.500" cy="1059.500" r="5.500" fill="#0a960a" /><path d="M295.500 1059.500l-5 2a5.500 5.500 0 0 0 5 3.500z" fill="#067006" />
      <text x="292" y="1028" fill="#2c2ce0">Z</text><text x="328" y="1064" fill="#ff1e1e">X</text>
    </g>
  </Canvas>
);

const g = "#c9d3df", gd = "#566a80";
const nav = {
  close: <Ic s={9}><circle cx="4.500" cy="4.500" r="4" fill={gd} /><path d="M3 3l3 3m0-3L3 6" stroke={g} /></Ic>,
  wheel: <Ic s={22}><path d="M11 1h10v10A10 10 0 1 1 11 1z" fill="#b3c1d2" stroke={gd} strokeWidth="1.500" /><circle cx="11" cy="11" r="6" fill="#c4cfdd" stroke={gd} /><path d="M4 18l3-3h8l3 3" stroke={gd} /></Ic>,
  hand: <Ic><path d="M5 15L0 9l1-1 3 2-2-7h2l2 5V1h2l1 7 2-6 1 1-1 6 3-4 1 1-3 9z" fill={g} stroke={gd} /></Ic>,
  zoom: <Ic><path d="M11 11l4 4" stroke={gd} strokeWidth="3" /><circle cx="7" cy="6.500" r="6" fill={g} stroke={gd} /><path d="M4.500 4h5v5h-5z" stroke={gd} /></Ic>,
  orbit: <Ic><ellipse cx="8" cy="8" rx="3" ry="7" stroke={gd} /><path d="M4 5c-5 2-4 6 2 6M10 11c4 0 7-3 5-4M11 3v4M9 5h5M6 6v4M4 8h5" stroke={gd} /></Ic>,
  camera: <Ic><path d="M1 5h14v10H1z" fill={g} stroke={gd} /><path d="M4 8h8v4H4z" fill="#9dafc3" stroke={gd} /><path d="M2 5l3-4 2 3 4-3v4" stroke={gd} /></Ic>,
  menu: <Ic s={9}><circle cx="4.500" cy="4.500" r="4" fill={gd} /><path d="M2 3.500h5M3 5h3L4.500 7z" fill={g} stroke={g} strokeWidth=".5" /></Ic>,
};
const L = "#cfcfcf";

export default function App() {
  return (
    <Desktop>
      <Global />
      <Screen>
        <BackWindow>
          <BackTop><Ic w={8} h={14}><circle cx="-2" cy="7" r="6.500" fill="#1978d4" /></Ic></BackTop>
          <BackBand />
          <BackFill />
          <BackFoot><Ic w={7} h={16}><circle cx="-3" cy="8" r="6.500" stroke="#8a8a8a" fill="#fff" /></Ic></BackFoot>
        </BackWindow>
        <AppWindow>
          <TitleBar>
            <Logo>{qat.logo}<span>PRO</span></Logo>
            <Tool $w={22} aria-label="New">{qat.create}</Tool>
            <Tool $w={12} aria-label="New options"><Caret c="#d8d8d8" /></Tool>
            <Tool $w={25} aria-label="Open">{qat.open}</Tool>
            <Tool $w={24} aria-label="Save">{qat.save}</Tool>
            <Tool $w={23} aria-label="Undo">{qat.undo}</Tool>
            <Tool $w={12} aria-label="Undo options"><Caret c="#d8d8d8" /></Tool>
            <Tool $w={26} aria-label="Redo">{qat.redo}</Tool>
            <Tool $w={8} aria-label="Redo options"><Caret c="#a0a0a0" /></Tool>
            <Rule $l={6} $r={6} />
            <Tool $w={19} aria-label="Home">{qat.home}</Tool>
            <Tool $w={27} aria-label="Update">{qat.update}</Tool>
            <Tool $w={8} aria-label="Update options"><Caret c="#d8d8d8" /></Tool>
            <Tool $w={22} $ml={4} aria-label="Select">{qat.select}</Tool>
            <Tool $w={8} aria-label="Select options"><Caret c="#d8d8d8" /></Tool>
            <Tool $w={31} aria-label="Component">{qat.parts}</Tool>
            <Tool $w={18} aria-label="Material browser">{qat.ball}</Tool>
            <Combo $ml={3}>
              <Picker $faint aria-label="Material"><option>Material</option></Picker>
              <Caret w={8} c="#5a5a5a" />
            </Combo>
            <Tool $w={24} aria-label="Appearance browser"><Wheel /></Tool>
            <Combo>
              {qat.sphere}
              <Picker aria-label="Appearance"><option>Default</option></Picker>
              <Caret w={8} c="#4a4a4a" />
            </Combo>
            <Tool $w={25} aria-label="Adjust"><Wheel extra={<path d="M7 9h9l-3 4v3h-3v-3z" fill="#3fa9e8" stroke="#fff" strokeWidth=".8" />} /></Tool>
            <Tool $w={23} aria-label="Clear"><Wheel extra={RedX} /></Tool>
            <Tool $w={25} aria-label="Parameters"><Fx>f<sub>x</sub></Fx></Tool>
            <Tool $w={22} aria-label="Add">{qat.plus}</Tool>
            <Tool $w={18} aria-label="Customize">{qat.more}</Tool>
            <Caption><span>Autodesk Inventor Professional 2018</span><span>Pod chute.ipt</span></Caption>
            <Tool $w={13} aria-label="Collapse search"><Ic w={4} h={8}><path d="M0 0l4 4-4 4z" fill="#d8d8d8" /></Ic></Tool>
            <Search aria-label="Search" placeholder="Search Help &amp; Commands..." />
            <Tool $w={23} aria-label="Subscription">{qat.dish}</Tool>
            <Tool $w={24} aria-label="Favorites">{qat.star}</Tool>
            <Tool $w={25} aria-label="Account">{qat.user}</Tool>
            <SignIn>Sign In</SignIn>
            <Tool $w={8} aria-label="Account options"><Caret c="#d8d8d8" /></Tool>
            <Tool $w={35} aria-label="App store">{qat.cart}</Tool>
            <Rule $l={0} $r={4} />
            <Tool $w={26} aria-label="Help">{qat.help}</Tool>
            <Tool $w={8} aria-label="Help options"><Caret c="#d8d8d8" /></Tool>
            <Tool $w={24} $ml={18} aria-label="Minimize">{qat.min}</Tool>
            <Tool $w={25} aria-label="Restore">{qat.restore}</Tool>
            <Tool $w={25} aria-label="Close">{qat.close}</Tool>
          </TitleBar>
          <TabRow>
            <FileTab>File</FileTab>
            <RibbonTab $on>3D Model</RibbonTab>
            {["Sketch", "Annotate", "Inspect", "Tools", "Manage", "View", "Environments", "Get Started", "Vault", "Autodesk A360"].map(t => <RibbonTab key={t}>{t}</RibbonTab>)}
            <Tool $w={14} $ml={19} aria-label="Minimize ribbon"><Ic w={14} h={9}><rect x=".5" y=".5" width="13" height="8" rx="2" fill="#eef0f4" stroke="#fff" /><path d="M4 6h6L7 3z" fill="#333" /></Ic></Tool>
            <Tool $w={13} aria-label="Ribbon options"><Caret c="#e0e0e0" /></Tool>
          </TabRow>
          <Ribbon>
            <P w={79} title="Sketch">
              <Big>{big.sketch}<BigText>{"Start\n2D Sketch"}<SideCaret><Caret /></SideCaret></BigText></Big>
            </P>
            <P w={301} title="Create">
              <Big $w={49}>{big.extrude}<span>Extrude</span></Big>
              <Big $w={45}>{big.revolve}<span>Revolve</span></Big>
              <C ml={5} w={65} items={["Sweep", "Loft", "Coil"]} />
              <C w={72} items={["Emboss", "Derive", "Rib"]} />
              <C items={["Decal", "Import"]} />
            </P>
            <P w={63} title="Explore"><Big>{big.shape}<span>{"Shape\nGenerator"}</span></Big></P>
            <P w={362} title="Modify" menu>
              <Big $w={42}>{big.hole}<span>Hole</span></Big>
              <Big $w={36}>{big.fillet}<span>Fillet</span></Big>
              <C ml={5} w={78} items={["Chamfer", "Shell", "Draft"]} />
              <C w={112} items={["Thread", "Combine", "Thicken/ Offset"]} />
              <C items={["Split", "Direct", "Delete Face"]} />
            </P>
            <P w={127} title="Work Features">
              <Big $w={56}>{big.plane}<span>Plane</span><Caret /></Big>
              <C ml={2} items={["Axis", "Point", "UCS"]} />
            </P>
            <P w={172} title="Pattern">
              <C ml={7} w={103} items={["Rectangular", "Circular", "Sketch Driven"]} />
              <C items={["Mirror"]} />
            </P>
            <P w={119} title="Create Freeform">
              <Big $w={46}>{big.box}<span>Box</span><Caret /></Big>
              <C ml={2} items={["Face", "Convert"]} />
            </P>
            <P w={275} title="Surface">
              <C ml={7} w={64} items={["Stitch", "Patch", "Sculpt"]} />
              <C w={103} items={["Ruled Surface", "Trim", "Extend"]} />
              <C items={["Replace Face", "Repair Bodies", "Fit Mesh Face"]} />
            </P>
            <P w={68} title="Simulation"><Big>{big.stress}<span>{"Stress\nAnalysis"}</span></Big></P>
            <P w={73} title="Convert"><Big>{big.sheet}<span>{"Convert to\nSheet Metal"}</span></Big></P>
            <PanelMenu aria-label="Show panels"><Ic><circle cx="8" cy="8" r="7" fill="#eceef0" stroke={K} /><path d="M4 6h8l-4 5z" fill="#222b36" /></Ic><Caret /></PanelMenu>
          </Ribbon>
          <Workspace>
            <Browser>
              <BrowserHead>
                <BrowserTab>Model<Ic s={9}><path d="M1 1l7 7M8 1L1 8" stroke="#4a4a4a" /></Ic></BrowserTab>
                <HeadButton $w={19} aria-label="Add tab"><Ic s={9}><path d="M4.500 0v9M0 4.500h9" stroke="#eee" strokeWidth="2" /></Ic></HeadButton>
                <HeadButton $w={27} $push aria-label="Find"><Ic s={13}><circle cx="5.500" cy="5.500" r="4.500" stroke="#d0d0d0" /><path d="M9 9l3 3" stroke="#d0d0d0" /></Ic></HeadButton>
                <HeadButton $w={18} aria-label="Menu"><Ic w={12} h={11}><path d="M0 .5h12M0 5.500h12M0 10.500h12" stroke="#d0d0d0" /></Ic></HeadButton>
              </BrowserHead>
              <Tree>
                <RootRow>{tr.part}<TreeText>Pod chute.ipt</TreeText></RootRow>
                {rows.map(n => <TreeRow key={n.t}><Guide n={n} />{tr[n.i]}<TreeText $sel={n.sel}>{n.t}</TreeText></TreeRow>)}
              </Tree>
            </Browser>
            <Stage>
              <Viewport>
                <Drawing />
                <MiniBar>
                  <Grip />
                  <Pill>
                    <PillButton aria-label="Edit sketch"><Ic><path d="M3 2h12v13H3z" fill="#f3f3f3" stroke={K} /><path d="M6 12h7" stroke={B} /><path d="M4 11h3v3H4z" fill="#3d97dd" /><path d="M1 1l2 4 6 5 2-2-6-6z" fill="#f5b52e" stroke="#5f4818" strokeWidth=".7" /></Ic></PillButton>
                    <PillButton aria-label="Share sketch"><Ic><path d="M2 2h12M2 2v12M4 4h7c0 4-3 7-7 7z" stroke={K} /><path d="M0 0h3v3H0zM12 0h3v3h-3zM0 12h3v3H0z" fill="#fff" stroke={K} strokeWidth=".8" /><path d="M5 13l5-3h5v5H8z" fill="#d6e6f5" stroke={B} strokeWidth=".8" /><path d="M13 10h3v5h-3z" fill={B} /></Ic></PillButton>
                  </Pill>
                </MiniBar>
                <WindowButtons>
                  <Tool $w={24} aria-label="Minimize document"><Ic w={12} h={12}><path d="M0 6h12v4H0z" fill="#f5f5f5" stroke="#3c4b60" /></Ic></Tool>
                  <Tool $w={15} aria-label="Restore document"><Ic w={12} h={12}><path d="M4 1h7v7" stroke="#f5f5f5" strokeWidth="2" /><path d="M2 4h6v7H2z" fill="#33486a" stroke="#f5f5f5" strokeWidth="2" /></Ic></Tool>
                  <Tool $w={15} $ml={5} aria-label="Close document"><Ic w={10} h={10}><path d="M1 1l8 8M9 1L1 9" stroke="#f5f5f5" strokeWidth="3" /></Ic></Tool>
                </WindowButtons>
                <ViewCube><span>BOTTOM</span></ViewCube>
                <NavBar>
                  <NavButton $h={12} $end aria-label="Close navigation bar">{nav.close}</NavButton>
                  <NavButton $h={38} aria-label="Steering wheel">{nav.wheel}</NavButton>
                  <NavButton $h={7} aria-label="Wheel options"><Caret c={gd} /></NavButton>
                  <NavRule />
                  <NavButton $h={26} aria-label="Pan">{nav.hand}</NavButton>
                  <NavButton $h={22} aria-label="Zoom">{nav.zoom}</NavButton>
                  <NavButton $h={11} aria-label="Zoom options"><Caret c={gd} /></NavButton>
                  <NavButton $h={22} aria-label="Orbit">{nav.orbit}</NavButton>
                  <NavButton $h={12} aria-label="Orbit options"><Caret c={gd} /></NavButton>
                  <NavButton $h={24} aria-label="Look at">{nav.camera}</NavButton>
                  <NavButton $h={16} $end aria-label="Customize navigation bar">{nav.menu}</NavButton>
                </NavBar>
              </Viewport>
              <DocBar>
                <Tool $w={24} aria-label="Cascade"><Ic><path d="M1 6V1h9v2M4 9V4h9v2" stroke={L} strokeWidth="1.500" /><path d="M6 8h9v7H6z" stroke={L} strokeWidth="1.500" /></Ic></Tool>
                <Tool $w={24} aria-label="Arrange"><Ic><path d="M1 1h5v5H1zM9 1h5v5H9zM1 9h5v5H1zM9 9h5v5H9z" stroke={L} strokeWidth="1.500" /></Ic></Tool>
                <Tool $w={24} aria-label="Tile horizontally"><Ic><path d="M1 1h14v5H1zM1 9h14v5H1z" stroke={L} strokeWidth="1.500" /></Ic></Tool>
                <Tool $w={24} aria-label="Tile vertically"><Ic><path d="M1 1h5v14H1zM9 1h5v14H9z" stroke={L} strokeWidth="1.500" /></Ic></Tool>
                <Tool $w={24} aria-label="Tabs menu"><Ic w={10} h={8}><path d="M0 8h10L5 0z" fill="#e0e0e0" /></Ic></Tool>
                <DocTab $w={72}>My Home</DocTab>
                <DocTab $w={107} $on>Pod chute.ipt<Ic s={9}><path d="M1 1l7 7M8 1L1 8" stroke="#3c3c3c" strokeWidth="2" /></Ic></DocTab>
              </DocBar>
            </Stage>
          </Workspace>
          <Status><StatusText>Ready</StatusText><Count $w={40}>1</Count><Count $w={38}>1</Count></Status>
        </AppWindow>
      </Screen>
      <Taskbar><ActiveApp /><Clock>15:47</Clock><ShowDesktop /></Taskbar>
    </Desktop>
  );
}
